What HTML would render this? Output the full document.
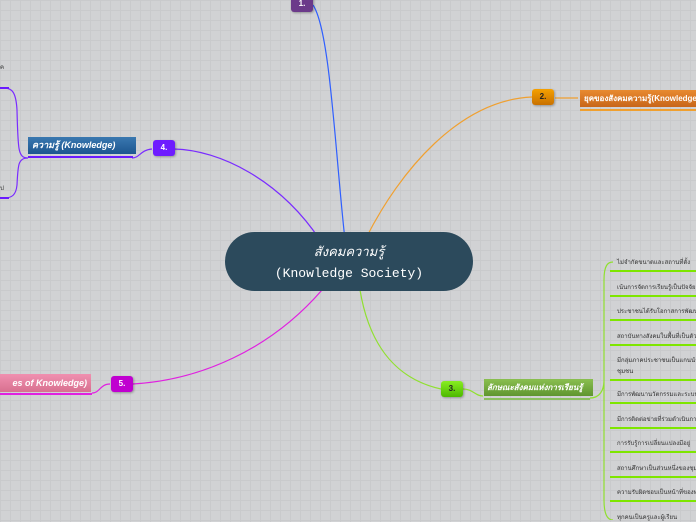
<!DOCTYPE html>
<html><head><meta charset="utf-8"><style>
body{margin:0;width:696px;height:520px;overflow:hidden;background-color:#d1d2d4;
background-image:linear-gradient(#c9cacc 1px,transparent 1px),linear-gradient(90deg,#c9cacc 1px,transparent 1px);background-size:10px 10px;position:relative;font-family:"Liberation Sans","Noto Sans CJK SC",sans-serif}
.a{position:absolute}
.num{position:absolute;width:22px;height:16px;border-radius:3px;color:#fff;font-size:8px;font-weight:bold;text-align:center;line-height:16px;box-shadow:1px 1px 2px rgba(0,0,0,.3)}
.item{position:absolute;left:617px;font-size:6px;color:#333;white-space:nowrap}
.ln{position:absolute;left:610px;width:90px;height:2px;background:#7ee600}
</style></head><body>
<svg class="a" width="696" height="520" style="left:0;top:0">
<g fill="none" stroke-width="1.2">
<path d="M345 240 C335 150 330 30 313 5" stroke="#2f5fff"/>
<path d="M365 240 C400 170 460 100 532 97" stroke="#f0a030"/>
<path d="M555 98 L578 98" stroke="#f0a030"/>
<path d="M320 240 C280 180 220 150 174 149" stroke="#7a2cff"/>
<path d="M152 149 C140 150 140 158 132 158" stroke="#7a2cff"/>
<path d="M28 158 C18 158 18 150 17 110 C16 92 12 88 4 88 M28 158 C18 158 18 165 17 185 C16 195 12 198 4 198" stroke="#7a2cff"/>
<path d="M322 290 C270 350 200 380 133 384" stroke="#e020e0"/>
<path d="M110 384 C100 384 100 393 92 393" stroke="#e020e0"/>
<path d="M360 290 C370 350 400 380 441 389" stroke="#90e030"/>
<path d="M463 389 C473 389 475 396 483 396" stroke="#90e030"/>
<path d="M590 398 C600 398 604 390 604 380 L604 280 C604 265 608 262 613 262 M604 380 L604 500 C604 515 608 520 613 520" stroke="#90e030"/>
</g>
<rect x="0" y="87" width="9" height="2" fill="#6a1aff"/>
<rect x="0" y="197" width="9" height="2" fill="#6a1aff"/>
</svg>
<div class="num" style="left:291px;top:-4px;background:#6b3a8a;height:16px">1.</div>
<div class="num" style="left:532px;top:89px;background:linear-gradient(#f5a000,#c87000);color:#222">2.</div>
<div class="a" style="left:580px;top:90px;width:120px;height:17px;background:linear-gradient(#e88a30,#c8661a);color:#fff;font-size:8px;font-weight:bold;line-height:17px;padding-left:4px;white-space:nowrap">ยุคของสังคมความรู้(Knowledge</div>
<div class="a" style="left:580px;top:109px;width:120px;height:2px;background:#f0a030"></div>
<div class="num" style="left:153px;top:140px;background:#6e1cff">4.</div>
<div class="a" style="left:28px;top:137px;width:104px;height:17px;background:linear-gradient(#3a78b0,#1d5690);color:#fff;font-size:9px;font-weight:bold;font-style:italic;line-height:17px;padding-left:4px;white-space:nowrap">ความรู้ (Knowledge)</div>
<div class="a" style="left:28px;top:156px;width:105px;height:2px;background:#6a1aff"></div>
<div class="a" style="left:0;top:62px;font-size:6px;color:#333">ค</div>
<div class="a" style="left:0;top:183px;font-size:6px;color:#333">ป</div>
<div class="a" style="left:225px;top:232px;width:248px;height:59px;border-radius:30px;background:#2c4a5c;color:#fff;text-align:center;font-size:13px;line-height:21px;padding-top:9px;box-sizing:border-box"><i>สังคมความรู้</i><br><span style="font-family:'Liberation Mono',monospace">(Knowledge Society)</span></div>
<div class="num" style="left:111px;top:376px;background:#c000d0">5.</div>
<div class="a" style="left:0;top:374px;width:91px;height:18px;background:linear-gradient(#f090b0,#d8708f);color:#fff;font-size:9px;font-weight:bold;font-style:italic;line-height:18px;white-space:nowrap;overflow:hidden;text-align:right;padding-right:4px;box-sizing:border-box">es of Knowledge)</div>
<div class="a" style="left:0;top:393px;width:92px;height:2px;background:#e020e0"></div>
<div class="num" style="left:441px;top:381px;background:linear-gradient(#88ee20,#4cb800);color:#222">3.</div>
<div class="a" style="left:484px;top:379px;width:106px;height:17px;background:linear-gradient(#8abf50,#5f9530);color:#fff;font-size:8px;font-weight:bold;font-style:italic;line-height:17px;padding-left:3px;white-space:nowrap">ลักษณะสังคมแห่งการเรียนรู้</div>
<div class="a" style="left:484px;top:398px;width:106px;height:2px;background:#8cc060"></div>
<div class="item" style="top:257px">ไม่จำกัดขนาดและสถานที่ตั้ง</div><div class="ln" style="top:270px"></div>
<div class="item" style="top:282px">เน้นการจัดการเรียนรู้เป็นปัจจัยสำคัญ</div><div class="ln" style="top:295px"></div>
<div class="item" style="top:306px">ประชาชนได้รับโอกาสการพัฒนา</div><div class="ln" style="top:319px"></div>
<div class="item" style="top:331px">สถาบันทางสังคมในพื้นที่เป็นตัวกลาง</div><div class="ln" style="top:344px"></div>
<div class="item" style="top:356px;line-height:11px">มีกลุ่มภาคประชาชนเป็นแกนนำ<br>ชุมชน</div><div class="ln" style="top:379px"></div>
<div class="item" style="top:389px">มีการพัฒนานวัตกรรมและระบบ</div><div class="ln" style="top:402px"></div>
<div class="item" style="top:414px">มีการติดต่อข่ายที่ร่วมดำเนินการ</div><div class="ln" style="top:427px"></div>
<div class="item" style="top:438px">การรับรู้การเปลี่ยนแปลงมีอยู่</div><div class="ln" style="top:451px"></div>
<div class="item" style="top:463px">สถานศึกษาเป็นส่วนหนึ่งของชุมชน</div><div class="ln" style="top:476px"></div>
<div class="item" style="top:487px">ความรับผิดชอบเป็นหน้าที่ของทุกคน</div><div class="ln" style="top:500px"></div>
<div class="item" style="top:512px">ทุกคนเป็นครูและผู้เรียน</div>
</body></html>
